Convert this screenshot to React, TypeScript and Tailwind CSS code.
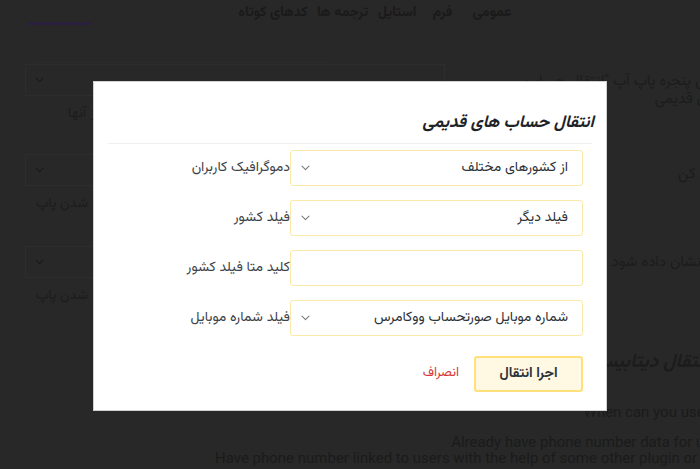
import React from 'react';

const fa = "font-['Vazirmatn','Noto_Sans_Arabic','DejaVu_Sans',sans-serif]";

const tabs = [
  { label: 'عمومی', w: 'w-[54px]' },
  { label: 'فرم', w: 'w-[45px]' },
  { label: 'استایل', w: 'w-[46px]' },
  { label: 'ترجمه ها', w: 'w-[63px]' },
  { label: 'کدهای کوتاه', w: 'w-[76px]' },
];

const Chevron = ({ className = '' }: { className?: string }) => (
  <svg width="9" height="6" viewBox="0 0 9 6" className={className} fill="none">
    <path d="M1 1.2l3.5 3.5L8 1.2" stroke="currentColor" strokeWidth="1.1" strokeLinecap="round" strokeLinejoin="round" />
  </svg>
);

// dimmed settings row behind the modal
const BgRow = ({ label, desc, h, pt, descMl }: { label: React.ReactNode; desc: string; h: string; pt: string; descMl: string }) => (
  <div className={`flex ${h}`}>
    <div className={`w-[200px] mr-[-35px] shrink-0 text-[15px] leading-[18px] text-[#1c1c1c] whitespace-nowrap ${pt}`}>{label}</div>
    <div className="flex-1" />
    <div className="w-[420px] ml-[25px] shrink-0">
      <div className="h-[32px] border border-[#2d2d2d] flex items-center justify-end pl-[9px]">
        <Chevron className="text-[#1a1a1a]" />
      </div>
      <div className="flex justify-end mt-[9px]">
        <span className={`text-[14px] leading-[18px] text-[#1c1c1c] whitespace-nowrap ${descMl}`}>{desc}</span>
      </div>
    </div>
  </div>
);

const Row = ({ label, value, input }: { label: string; value?: string; input?: boolean }) => (
  <div className="flex items-center">
    <div className="w-[293px] h-[36px] shrink-0 border border-[#fbe9a8] rounded-[3px] flex items-center justify-between pr-[14px] pl-[10px] bg-white">
      <span className="text-[14px] text-[#2c3338]">{value}</span>
      {!input && <Chevron className="text-[#787c82]" />}
    </div>
    <div className="text-[14px] text-[#3c434a] whitespace-nowrap">{label}</div>
  </div>
);

export default function App() {
  return (
    <div dir="rtl" className={`relative w-full h-[469px] overflow-hidden bg-[#282828] ${fa}`}>
      {/* page behind the dimmed overlay */}
      <div className="flex items-end h-[26px]">
        <div className="w-[181px] shrink-0" />
        {tabs.map((t) => (
          <div key={t.label} className={`${t.w} shrink-0 flex justify-center whitespace-nowrap text-[14px] font-bold text-[#1a1a1a] leading-[20px] pb-[3px]`}>
            {t.label}
          </div>
        ))}
        <div className="flex-1" />
        <div className="w-[65px] h-[3px] bg-[#2a1f3d] ml-[27px] mb-[1px]" />
      </div>
      <div className="h-px bg-[#2b2b2b] ml-[33px] mr-[370px] mt-[36px]" />

      <div className="mt-[1px]">
        <BgRow
          h="h-[90px]"
          pt="pt-[9px]"
          descMl="ml-[43px]"
          label={<>نمایش پنجره پاپ آپ "انتقال حساب<br />کاربران قدیمی</>}
          desc="و استفاده از آنها"
        />
        <BgRow h="h-[92px]" pt="pt-[12px]" descMl="ml-[11px]" label="مخفی کن" desc="بعد از بسته شدن پاپ" />
        <BgRow h="h-[105px]" pt="pt-[8px]" descMl="ml-[11px]" label="زمانی نشان داده شود" desc="بعد از بسته شدن پاپ" />
      </div>

      <div className="mr-[-8px] text-[19px] leading-[24px] font-bold italic text-[#1c1c1c] whitespace-nowrap">انتقال دیتابیس</div>
      <div dir="ltr" className="font-['Roboto',sans-serif] text-right mr-[-40px] text-[#1b1b1b] text-[15px] whitespace-nowrap">
        <div className="mt-[28px] leading-[18px]">When can you use this?</div>
        <div className="mt-[14px] leading-[15px]">Already have phone number data for users?</div>
        <div className="leading-[16px]">Have phone number linked to users with the help of some other plugin or form?</div>
      </div>

      {/* modal */}
      <div className="fixed inset-0 flex justify-center items-start pt-[81px]">
        <div className="w-[514px] h-[330px] bg-white border border-[#d0d0d0]">
          <div className="px-[12px] pt-[29px] pb-[8px]">
            <h2 className="text-[17px] leading-[24px] font-bold italic text-[#1d2327]">انتقال حساب های قدیمی</h2>
          </div>
          <div className="mx-[14px] h-px bg-[#f0f0f1]" />
          <div className="px-[23px] pt-[6px] flex flex-col gap-[14px]">
            <Row label="دموگرافیک کاربران" value="از کشورهای مختلف" />
            <Row label="فیلد کشور" value="فیلد دیگر" />
            <Row label="کلید متا فیلد کشور" input />
            <Row label="فیلد شماره موبایل" value="شماره موبایل صورتحساب ووکامرس" />
            <div className="flex items-center gap-[15px] mt-[6px]">
              <button className="w-[109px] h-[36px] bg-[#fff8e3] border-2 border-[#ffe07a] rounded-[3px] text-[14px] font-bold text-[#2c3338]">
                اجرا انتقال
              </button>
              <button className="text-[13px] text-[#d63638]">انصراف</button>
            </div>
          </div>
        </div>
      </div>
    </div>
  );
}
